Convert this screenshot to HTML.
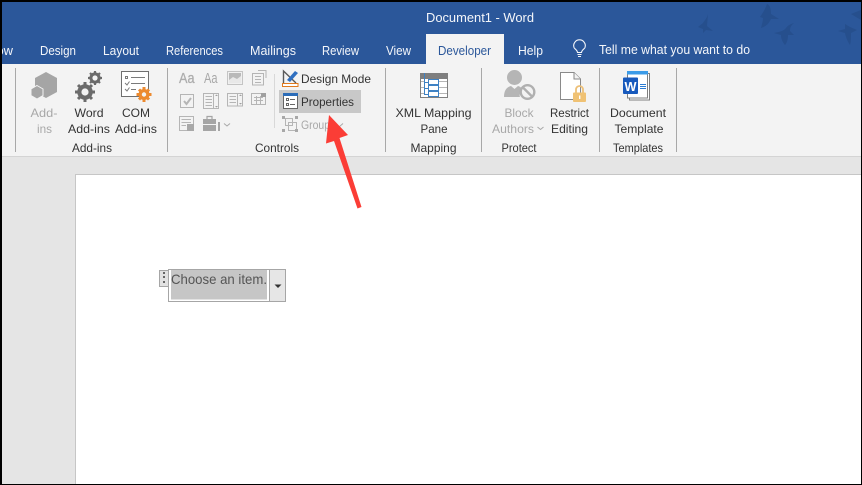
<!DOCTYPE html>
<html><head><meta charset="utf-8"><style>
html,body{margin:0;padding:0;background:#000;width:862px;height:485px;overflow:hidden}
svg{display:block}
text{font-family:"Liberation Sans",sans-serif;font-size:12px;fill:#333}
.t{fill:#f4f6fa;font-size:12.5px}
.d{fill:#a8a8a8}
.c{text-anchor:middle}
</style></head><body>
<svg width="862" height="485" viewBox="0 0 862 485" xmlns="http://www.w3.org/2000/svg">
<rect width="862" height="485" fill="#000"/>
<rect x="2" y="2" width="859" height="62" fill="#2b579a"/>
<rect x="2" y="64" width="859" height="92" fill="#f3f3f3"/>
<rect x="2" y="156" width="859" height="1" fill="#d4d4d4"/>
<rect x="2" y="157" width="859" height="327" fill="#e5e5e5"/>
<rect x="75" y="174" width="786" height="310" fill="#c6c6c6"/>
<rect x="76" y="175" width="785" height="309" fill="#fff"/>

<!-- birds -->
<g fill="#264f8d">
<path d="M708 14 C707 18 705 20 703 23 L698 27 L703 29 L703 33 L706 30 L713 31 L707 26Z"/>
<path d="M767 4 C770 5 771 9 771 14 L779 19 L771 19 C769 23 767 26 761 28 C762 24 763 21 763 18 L760 17 C762 14 765 10 767 4Z"/>
<path d="M794 23 C790 26 790 29 790 31 L794 35 L788 35 C788 39 787 43 785 45 C783 43 781 39 781 35 L774 33 C779 32 784 31 786 28 C788 25 791 24 794 23Z"/>
<path d="M845 24 L850 27 L857 30 L851 33 C851 38 851 42 850 45 C848 42 846 38 845 33 L838 31 L845 29Z"/>
<path d="M861 10 L851 14 L861 20Z"/>
</g>

<text x="426" y="22" class="t" textLength="108" lengthAdjust="spacingAndGlyphs">Document1  -  Word</text>

<!-- tabs -->
<rect x="426" y="34" width="78" height="30" fill="#f3f3f3"/>
<text x="-3.500" y="55" class="t" textLength="16.500" lengthAdjust="spacingAndGlyphs">ow</text>
<rect x="0" y="2" width="2" height="60" fill="#000"/>
<text x="40" y="55" class="t" textLength="36" lengthAdjust="spacingAndGlyphs">Design</text>
<text x="103" y="55" class="t" textLength="36" lengthAdjust="spacingAndGlyphs">Layout</text>
<text x="166" y="55" class="t" textLength="57" lengthAdjust="spacingAndGlyphs">References</text>
<text x="250" y="55" class="t" textLength="46" lengthAdjust="spacingAndGlyphs">Mailings</text>
<text x="322" y="55" class="t" textLength="37" lengthAdjust="spacingAndGlyphs">Review</text>
<text x="386" y="55" class="t" textLength="25" lengthAdjust="spacingAndGlyphs">View</text>
<text x="438" y="55" class="t" style="fill:#2b579a" textLength="53" lengthAdjust="spacingAndGlyphs">Developer</text>
<text x="518" y="55" class="t" textLength="25" lengthAdjust="spacingAndGlyphs">Help</text>
<text x="599" y="54" class="t" textLength="151" lengthAdjust="spacingAndGlyphs">Tell me what you want to do</text>
<!-- bulb -->
<g fill="none" stroke="#f4f6fa" stroke-width="1.100">
<path d="M577.500 52.500 C577.500 50 574 48.500 574 47.500 A5.800 5.800 0 1 1 585 47.500 C585 48.500 581.500 50 581.500 52.500Z"/>
<path d="M577.500 54.500H581.500M578 56.500H581"/>
</g>

<!-- separators -->
<g fill="#a8a8a8">
<rect x="15" y="68" width="1" height="84"/>
<rect x="167" y="68" width="1" height="84"/>
<rect x="385" y="68" width="1" height="84"/>
<rect x="481" y="68" width="1" height="84"/>
<rect x="599" y="68" width="1" height="84"/>
<rect x="676" y="68" width="1" height="84"/>
</g>
<rect x="274" y="74" width="1" height="54" fill="#d8d8d8"/>

<!-- Add-ins hex -->
<path d="M46 72 L57 78 L57 92 L46 98 L35 92 L35 78Z" fill="#a5a5a5"/>
<path d="M37 85.500 L43 89 L43 95.500 L37 99 L31 95.500 L31 89Z" fill="#a5a5a5" stroke="#f3f3f3" stroke-width="1"/>

<!-- gears -->
<g fill="none" stroke="#6b6b6b">
<circle cx="85" cy="92" r="5.500" stroke-width="4.500"/>
<path d="M85 82V102M75 92H95M78 85L92 99M92 85L78 99" stroke-width="3"/>
<circle cx="95" cy="78" r="4" stroke-width="3.200"/>
<path d="M95 71V85M88 78H102M90 73L100 83M100 73L90 83" stroke-width="2.200"/>
</g>
<circle cx="85" cy="92" r="3.600" fill="#f3f3f3"/>
<circle cx="95" cy="78" r="2.600" fill="#f3f3f3"/>

<!-- COM icon -->
<rect x="121.500" y="71.500" width="27" height="25" fill="#fff" stroke="#6f6f6f"/>
<g fill="none" stroke="#7a7a7a">
<rect x="125.500" y="76.500" width="2" height="2"/>
<path d="M131 77.500H145M131 83.500H145M131 89.500H136"/>
<path d="M125 83L127 85L129.500 81.500M125 89L127 91L129.500 87.500"/>
</g>
<g fill="none" stroke="#ec8a2f">
<circle cx="144" cy="94.500" r="3.800" stroke-width="3.400"/>
<path d="M144 87V102M136.500 94.500H151.500M139 89.500L149 99.500M149 89.500L139 99.500" stroke-width="3"/>
</g>
<circle cx="144" cy="94.500" r="2.200" fill="#f3f3f3"/>

<text x="44" y="117" class="c d" textLength="27" lengthAdjust="spacingAndGlyphs">Add-</text>
<text x="44.500" y="133" class="c d" textLength="15" lengthAdjust="spacingAndGlyphs">ins</text>
<text x="89" y="117" class="c" textLength="29" lengthAdjust="spacingAndGlyphs">Word</text>
<text x="89" y="133" class="c" textLength="42" lengthAdjust="spacingAndGlyphs">Add-ins</text>
<text x="136" y="117" class="c" textLength="28" lengthAdjust="spacingAndGlyphs">COM</text>
<text x="136" y="133" class="c" textLength="42" lengthAdjust="spacingAndGlyphs">Add-ins</text>
<text x="92" y="152" class="c" textLength="40" lengthAdjust="spacingAndGlyphs">Add-ins</text>

<!-- controls -->
<text x="179" y="83" style="font-size:14.500px;fill:#adadad;stroke:#adadad;stroke-width:.3" textLength="15.500" lengthAdjust="spacingAndGlyphs">Aa</text>
<text x="204" y="83" style="font-size:14.500px;fill:#a8a8a8" textLength="13.500" lengthAdjust="spacingAndGlyphs">Aa</text>
<rect x="227.500" y="71.500" width="15" height="13" fill="#f0f0f0" stroke="#c4c4c4"/>
<rect x="229" y="73" width="12" height="10" fill="#b9b9b9"/>
<path d="M229 80 L233 77 L237 79 L241 76 V83 H229Z" fill="#e8e8e8"/>
<g fill="none" stroke="#b5b5b5">
<rect x="252.500" y="73.500" width="11" height="11.500" fill="#f3f3f3"/>
<path d="M255 76.500H261M255 79.500H261M255 82.500H261M258 70.500H266V78"/>
<rect x="180.500" y="94.500" width="13" height="13" fill="#f3f3f3"/>
<path d="M184 101L186.500 104L191 98" stroke-width="2"/>
<rect x="203.500" y="93.500" width="15" height="15" fill="#f3f3f3"/>
<path d="M205.500 96.500H212M205.500 99.500H212M205.500 102.500H212M205.500 105.500H212M213.500 93.500V108.500"/>
<rect x="227.500" y="93.500" width="15" height="12.500" fill="#f3f3f3"/>
<path d="M229.500 96.500H236M229.500 99.500H236M229.500 102.500H236M237.500 93.500V106"/>
<rect x="251.500" y="93.500" width="14" height="11" fill="#f3f3f3"/>
<path d="M254 97.500H263M254 100.500H263M256.500 96V104M260.500 96V104"/>
<rect x="179.500" y="116.500" width="14" height="14" fill="#f3f3f3"/>
<path d="M181.500 119.500H191M181.500 122.500H191M181.500 125.500H186"/>
</g>
<path d="M215 96L216.500 94.500L218 96ZM215 106L216.500 107.500L218 106ZM239 96L240.500 94.500L242 96ZM239 103L240.500 104.500L242 103ZM261 93H266V97H261Z" fill="#a0a0a0"/>
<rect x="187" y="124" width="7" height="7" fill="#a8a8a8"/>
<path d="M203 119H216V131H203Z" fill="#a5a5a5"/>
<path d="M207 119V116.500H212V119" fill="none" stroke="#a5a5a5" stroke-width="1.200"/>
<rect x="203" y="124" width="13" height="1" fill="#f3f3f3"/>
<rect x="218" y="122" width="2" height="9" fill="#a5a5a5"/>
<path d="M224 123.500L227 126L230 123.500" fill="none" stroke="#a8a8a8"/>

<!-- Design mode -->
<path d="M283.500 83V71L296 83" fill="none" stroke="#5a5a5a" stroke-width="1.400"/>
<path d="M287 80L295 71L298 73L290 82Z" fill="#2f6fc0"/>
<rect x="282.500" y="83.500" width="15.500" height="3" fill="#fff" stroke="#e07a1f"/>
<text x="301" y="83" textLength="70" lengthAdjust="spacingAndGlyphs">Design Mode</text>

<!-- Properties -->
<rect x="279" y="90" width="82" height="23" fill="#c8c8c8"/>
<rect x="283.500" y="93.500" width="14" height="15" fill="#fff" stroke="#666"/>
<rect x="283" y="93" width="15" height="3" fill="#2b6cb8"/>
<g fill="none" stroke="#666">
<rect x="286.500" y="98.500" width="2" height="2"/><rect x="286.500" y="103.500" width="2" height="2"/>
<path d="M290 99.500H295M290 104.500H295"/>
</g>
<text x="301" y="106" textLength="53" lengthAdjust="spacingAndGlyphs">Properties</text>

<!-- Group -->
<g fill="none" stroke="#b5b5b5">
<rect x="285.500" y="118.500" width="7" height="7"/>
<rect x="288.500" y="122.500" width="8" height="8"/>
</g>
<g fill="#a8a8a8"><rect x="282" y="116" width="3" height="3"/><rect x="295" y="116" width="3" height="3"/><rect x="282" y="129" width="3" height="3"/><rect x="295" y="129" width="3" height="3"/></g>
<text x="301" y="129" class="d" textLength="29" lengthAdjust="spacingAndGlyphs">Group</text>
<path d="M335 123.500L339 127L343 123.500" fill="none" stroke="#a8a8a8"/>
<text x="277" y="152" class="c" textLength="44" lengthAdjust="spacingAndGlyphs">Controls</text>

<!-- XML -->
<rect x="420.500" y="73.500" width="27" height="24" fill="#fff" stroke="#7f7f7f"/>
<rect x="420" y="73" width="28" height="6" fill="#7f7f7f"/>
<path d="M421 81.500H424M439 81.500H447M421 87.500H424M439 87.500H447M421 93.500H424M439 93.500H447" stroke="#b5b5b5"/>
<g fill="#fff" stroke="#3f82c4">
<path d="M424.500 73V94.500H428M424.500 82.500H428M424.500 88.500H428" fill="none"/>
<rect x="428.500" y="79.500" width="10" height="5"/>
<rect x="428.500" y="85.500" width="10" height="5"/>
<rect x="428.500" y="91.500" width="10" height="5"/>
</g>
<text x="433.500" y="117" class="c" textLength="76" lengthAdjust="spacingAndGlyphs">XML Mapping</text>
<text x="434" y="133" class="c" textLength="27" lengthAdjust="spacingAndGlyphs">Pane</text>
<text x="433.500" y="152" class="c" textLength="46" lengthAdjust="spacingAndGlyphs">Mapping</text>

<!-- Block Authors -->
<circle cx="514.500" cy="77.500" r="7.500" fill="#b5b5b5"/>
<path d="M504 97 C504 90 507 87 511 86 L514.500 89 L518 86 C520 86.500 522 88 523 90 C520 92 519 95 520 97Z" fill="#b5b5b5"/>
<circle cx="527.500" cy="92" r="6.800" fill="#f3f3f3" stroke="#b0b0b0" stroke-width="2.400"/>
<path d="M523 87.500L532 96.500" stroke="#b0b0b0" stroke-width="2.400"/>
<text x="519" y="117" class="c d" textLength="29" lengthAdjust="spacingAndGlyphs">Block</text>
<text x="492" y="133" class="d" textLength="42" lengthAdjust="spacingAndGlyphs">Authors</text>
<path d="M537.500 127L540.500 129.500L543.500 127" fill="none" stroke="#a8a8a8"/>
<text x="519" y="152" class="c" textLength="35" lengthAdjust="spacingAndGlyphs">Protect</text>

<!-- Restrict -->
<path d="M560.500 72.500H574L580.500 79V99.500H560.500Z" fill="#fff" stroke="#8a8a8a"/>
<path d="M574 72.500V79H580.500" fill="#f3f3f3" stroke="#8a8a8a"/>
<path d="M576 93V89.500A3.500 3.500 0 0 1 583 89.500V93" fill="none" stroke="#edc078" stroke-width="1.800"/>
<rect x="573" y="92.500" width="13" height="9.500" rx="1" fill="#f0c274"/>
<rect x="579" y="95.500" width="1.400" height="3.500" fill="#fff"/>
<text x="569.500" y="117" class="c" textLength="39" lengthAdjust="spacingAndGlyphs">Restrict</text>
<text x="569.500" y="133" class="c" textLength="37" lengthAdjust="spacingAndGlyphs">Editing</text>

<!-- Doc template -->
<rect x="629.500" y="73.500" width="20" height="26.500" fill="#fff" stroke="#7f7f7f"/>
<rect x="627.500" y="72.500" width="20" height="25.500" fill="#fff" stroke="#7f7f7f"/>
<rect x="627" y="71" width="21" height="3.500" fill="#3b9be8"/>
<rect x="623" y="77.500" width="15" height="16.500" rx="1" fill="#185abd"/>
<text x="630.500" y="91" class="c" style="font-size:13px;font-weight:bold;fill:#fff" textLength="12" lengthAdjust="spacingAndGlyphs">W</text>
<path d="M640 84.500H646M640 86.500H646M640 88.500H646" stroke="#2b7cd3"/>
<text x="638" y="117" class="c" textLength="56" lengthAdjust="spacingAndGlyphs">Document</text>
<text x="639" y="133" class="c" textLength="49" lengthAdjust="spacingAndGlyphs">Template</text>
<text x="638" y="152" class="c" textLength="50" lengthAdjust="spacingAndGlyphs">Templates</text>

<!-- Content control -->
<rect x="168.500" y="269.500" width="117" height="32" fill="#fff" stroke="#a6a6a6"/>
<rect x="171" y="270" width="96" height="29.500" fill="#c6c6c6"/>
<rect x="270" y="270" width="15" height="31" fill="#e6e6e6"/>
<rect x="269" y="270" width="1" height="31" fill="#a6a6a6"/>
<path d="M274.500 284.500H281.500L278 288Z" fill="#333"/>
<rect x="159.500" y="270.500" width="9" height="16" fill="#e2e2e2" stroke="#a6a6a6"/>
<g fill="#666"><rect x="163" y="272" width="2" height="2"/><rect x="163" y="276" width="2" height="2"/><rect x="163" y="281" width="2" height="2"/></g>
<text x="171" y="284" style="font-size:14px;fill:#555" textLength="96" lengthAdjust="spacingAndGlyphs">Choose an item.</text>

<!-- Arrow -->
<path d="M329 115 L348 135 L339.500 138 L361.500 207 L357.500 208.500 L334 141 L326 143.500Z" fill="#fb3d36"/>
</svg>
</body></html>
